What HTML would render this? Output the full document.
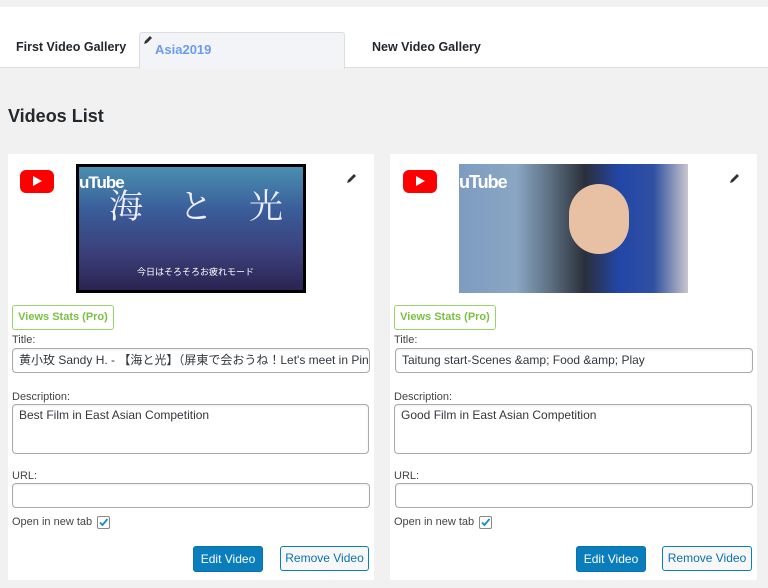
<!DOCTYPE html>
<html><head><meta charset="utf-8"><style>
*{box-sizing:border-box;margin:0;padding:0}
body{width:768px;height:588px;background:#f1f1f1;font-family:"Liberation Sans","Noto Sans CJK JP",sans-serif;position:relative;overflow:hidden;color:#23282d}
.a{position:absolute}
.hdr{left:0;top:7px;width:768px;height:61px;background:#fff;border-bottom:1px solid #ddd}
.tab{font-size:12.5px;font-weight:bold;color:#23282d}
.act{left:139px;top:32px;width:206px;height:37px;background:#f3f4f7;border:1px solid #ddd;border-bottom:none;border-radius:3px 3px 0 0}
.card{background:#fff;top:154px;height:426px}
.lbl{font-size:11px;color:#444}
.inp{border:1px solid #aaa;border-radius:4px;background:#fff;font-size:12px;padding:0 6px;color:#32373c;box-shadow:inset 0 1px 2px rgba(0,0,0,.07)}
.vs{border:1px solid #9ad36a;border-radius:3px;color:#7ac143;font-size:11px;font-weight:bold;text-align:center;line-height:22px}
.btnp{background:#0a7dbd;color:#fff;border-radius:3px;font-size:12px;text-align:center;line-height:25px;border:1px solid #0872ad}
.btns{background:#f7f7f7;color:#0a72b3;border:1px solid #0a7dbd;border-radius:3px;font-size:12px;text-align:center;line-height:23px}
.cb{width:13px;height:13px;border:1px solid #888;border-radius:2px;background:#fff}
.yt{width:34px;height:23px;background:#f00;border-radius:6px}
.yt:after{content:"";position:absolute;left:13px;top:6px;border-left:9px solid #fff;border-top:5.5px solid transparent;border-bottom:5.5px solid transparent}
</style></head><body>
<div class="a hdr"></div>
<div class="a tab" style="left:16px;top:40px">First Video Gallery</div>
<div class="a act"></div>
<svg class="a" style="left:142px;top:34px" width="12" height="12" viewBox="0 0 12 12"><path d="M2 10l1-3 5-5 2 2-5 5z" fill="#333"/></svg>
<div class="a" style="left:155px;top:42px;font-size:13px;font-weight:bold;color:#6a9bf3">Asia2019</div>
<div class="a tab" style="left:372px;top:40px">New Video Gallery</div>
<div class="a" style="left:8px;top:106px;font-size:18px;font-weight:bold">Videos List</div>

<!-- card 1 -->
<div class="a card" style="left:8px;width:366px"></div>
<div class="a yt" style="left:20px;top:170px"></div>
<div class="a" style="left:76px;top:164px;width:230px;height:129px;background:#000;padding:3px">
<div style="width:100%;height:100%;background:linear-gradient(180deg,#4a8fb0 0%,#3a5d9a 35%,#3b3f7a 70%,#2a2452 100%);position:relative;overflow:hidden">
<div class="a" style="left:0;top:6px;color:#fff;font-size:17px;font-weight:bold;letter-spacing:-1px">uTube</div>
<div class="a" style="left:30px;top:12px;color:#eef;font-size:34px;font-family:'Noto Serif CJK SC',serif">海</div>
<div class="a" style="left:100px;top:12px;color:#eef;font-size:34px;font-family:'Noto Serif CJK SC',serif">と</div>
<div class="a" style="left:170px;top:12px;color:#eef;font-size:34px;font-family:'Noto Serif CJK SC',serif">光</div>
<div class="a" style="left:58px;top:98px;color:#fff;font-size:9px;font-family:'Noto Sans CJK JP',sans-serif">今日はそろそろお疲れモード</div>
</div></div>
<svg class="a" style="left:346px;top:172px" width="12" height="12" viewBox="0 0 12 12"><path d="M1 11l1-3 6-6 2 2-6 6z" fill="#333"/></svg>
<div class="a vs" style="left:12px;top:305px;width:102px;height:25px">Views Stats (Pro)</div>
<div class="a lbl" style="left:12px;top:334px">Title:</div>
<div class="a inp" style="left:12px;top:348px;width:358px;height:25px;line-height:23px;white-space:nowrap;overflow:hidden">黄小玫 Sandy H. - 【海と光】（屏東で会おうね！Let's meet in Pingtung</div>
<div class="a lbl" style="left:12px;top:391px">Description:</div>
<div class="a inp" style="left:12px;top:404px;width:357px;height:50px;padding-top:3px">Best Film in East Asian Competition</div>
<div class="a lbl" style="left:12px;top:470px">URL:</div>
<div class="a inp" style="left:12px;top:483px;width:358px;height:25px"></div>
<div class="a lbl" style="left:12px;top:516px">Open in new tab</div>
<div class="a cb" style="left:97px;top:516px"><svg width="11" height="11" viewBox="0 0 11 11" style="display:block"><path d="M2 5.5l2.5 2.5 5-6" stroke="#1e8cbe" stroke-width="1.8" fill="none"/></svg></div>
<div class="a btnp" style="left:193px;top:546px;width:70px;height:26px">Edit Video</div>
<div class="a btns" style="left:280px;top:546px;width:89px;height:25px">Remove Video</div>

<!-- card 2 -->
<div class="a card" style="left:390px;width:367px"></div>
<div class="a yt" style="left:403px;top:170px"></div>
<div class="a" style="left:459px;top:164px;width:229px;height:129px;background:linear-gradient(90deg,#7d9cc0 0%,#8aa6c4 25%,#5c6f80 40%,#2a2f3a 55%,#2246a8 70%,#3050a0 85%,#c9c6cc 100%);overflow:hidden">
<div class="a" style="left:0;top:8px;color:#fff;font-size:18px;font-weight:bold;letter-spacing:-1px">uTube</div>
<div class="a" style="left:110px;top:20px;width:60px;height:70px;border-radius:30px;background:#e8c0a4"></div>
</div>
<svg class="a" style="left:729px;top:172px" width="12" height="12" viewBox="0 0 12 12"><path d="M1 11l1-3 6-6 2 2-6 6z" fill="#333"/></svg>
<div class="a vs" style="left:394px;top:305px;width:102px;height:25px">Views Stats (Pro)</div>
<div class="a lbl" style="left:394px;top:334px">Title:</div>
<div class="a inp" style="left:395px;top:348px;width:358px;height:25px;line-height:23px">Taitung start-Scenes &amp;amp; Food &amp;amp; Play</div>
<div class="a lbl" style="left:394px;top:391px">Description:</div>
<div class="a inp" style="left:394px;top:404px;width:358px;height:50px;padding-top:3px">Good Film in East Asian Competition</div>
<div class="a lbl" style="left:394px;top:470px">URL:</div>
<div class="a inp" style="left:395px;top:483px;width:358px;height:25px"></div>
<div class="a lbl" style="left:394px;top:516px">Open in new tab</div>
<div class="a cb" style="left:479px;top:516px"><svg width="11" height="11" viewBox="0 0 11 11" style="display:block"><path d="M2 5.5l2.5 2.5 5-6" stroke="#1e8cbe" stroke-width="1.8" fill="none"/></svg></div>
<div class="a btnp" style="left:576px;top:546px;width:70px;height:26px">Edit Video</div>
<div class="a btns" style="left:662px;top:546px;width:90px;height:25px">Remove Video</div>
</body></html>
